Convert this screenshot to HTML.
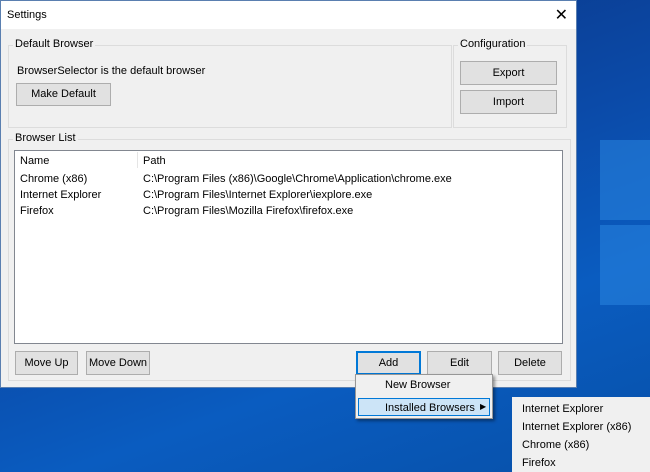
<!DOCTYPE html><html><head><style>
html,body{margin:0;width:650px;height:472px;overflow:hidden}
body{position:relative;font-family:"Liberation Sans",sans-serif;font-size:11px;color:#000;
background:linear-gradient(160deg,#0a2f7a 0%,#0b4aa8 45%,#0a5cc0 70%,#0750a8 100%)}
.logo{position:absolute;background:#2a85e0;opacity:.55}
.win{position:absolute;left:0;top:0;width:577px;height:388px;background:#f0f0f0;border:1px solid #5a7fb0;box-sizing:border-box}
.title{height:28px;background:#fff;position:relative}
.title span{position:absolute;left:6px;top:8px}
.title b{position:absolute;right:8px;top:4px;font-weight:normal;font-size:16px}
.grp{position:absolute;border:1px solid #dcdcdc}
.grp>i{position:absolute;top:-8px;left:4px;background:#f0f0f0;padding:0 2px;font-style:normal}
.btn{position:absolute;background:#e1e1e1;border:1px solid #adadad;text-align:center;box-sizing:border-box;line-height:22px}
.list{position:absolute;left:13px;top:149px;width:549px;height:194px;background:#fff;border:1px solid #828790;box-sizing:border-box}
.t{position:absolute;white-space:nowrap}
</style></head><body>
<div class="logo" style="left:600px;top:140px;width:50px;height:80px"></div>
<div class="logo" style="left:600px;top:225px;width:50px;height:80px"></div>
<div class="win">
<div class="title"><span>Settings</span><b>✕</b></div>
<div class="grp" style="left:7px;top:44px;width:442px;height:81px"><i>Default Browser</i></div>
<div class="t" style="left:16px;top:64px">BrowserSelector is the default browser</div>
<div class="btn" style="left:15px;top:82px;width:95px;height:23px;line-height:21px">Make Default</div>
<div class="grp" style="left:452px;top:44px;width:112px;height:81px"><i>Configuration</i></div>
<div class="btn" style="left:459px;top:60px;width:97px;height:24px">Export</div>
<div class="btn" style="left:459px;top:89px;width:97px;height:24px">Import</div>
<div class="grp" style="left:7px;top:138px;width:561px;height:240px"><i>Browser List</i></div>
<div class="list">
<div class="t" style="left:5px;top:4px">Name</div><div style="position:absolute;left:122px;top:1px;width:1px;height:16px;background:#e5e5e5"></div>
<div class="t" style="left:128px;top:4px">Path</div>
<div class="t" style="left:5px;top:22px">Chrome (x86)</div><div class="t" style="left:128px;top:22px">C:\Program Files (x86)\Google\Chrome\Application\chrome.exe</div>
<div class="t" style="left:5px;top:38px">Internet Explorer</div><div class="t" style="left:128px;top:38px">C:\Program Files\Internet Explorer\iexplore.exe</div>
<div class="t" style="left:5px;top:54px">Firefox</div><div class="t" style="left:128px;top:54px">C:\Program Files\Mozilla Firefox\firefox.exe</div>
</div>
<div class="btn" style="left:14px;top:350px;width:63px;height:24px">Move Up</div>
<div class="btn" style="left:85px;top:350px;width:64px;height:24px">Move Down</div>
<div class="btn" style="left:355px;top:350px;width:65px;height:24px;border:2px solid #0078d7;line-height:20px">Add</div>
<div class="btn" style="left:426px;top:350px;width:65px;height:24px">Edit</div>
<div class="btn" style="left:497px;top:350px;width:64px;height:24px">Delete</div>
</div>
<div style="position:absolute;left:355px;top:374px;width:138px;height:45px;background:#f0f0f0;border:1px solid #979797;box-sizing:border-box;box-shadow:2px 2px 3px rgba(0,0,0,.4)">
<div class="t" style="left:29px;top:4px">New Browser</div>
<div style="position:absolute;left:2px;top:23px;width:132px;height:18px;background:#cce4f7;border:1px solid #0078d7;box-sizing:border-box"></div>
<div class="t" style="left:29px;top:27px">Installed Browsers</div>
<div class="t" style="left:124px;top:27px;font-size:8px">▶</div>
</div>
<div style="position:absolute;left:512px;top:397px;width:140px;height:80px;background:#f0f0f0">
<div class="t" style="left:10px;top:6px">Internet Explorer</div>
<div class="t" style="left:10px;top:24px">Internet Explorer (x86)</div>
<div class="t" style="left:10px;top:42px">Chrome (x86)</div>
<div class="t" style="left:10px;top:60px">Firefox</div>
</div>
</body></html>
